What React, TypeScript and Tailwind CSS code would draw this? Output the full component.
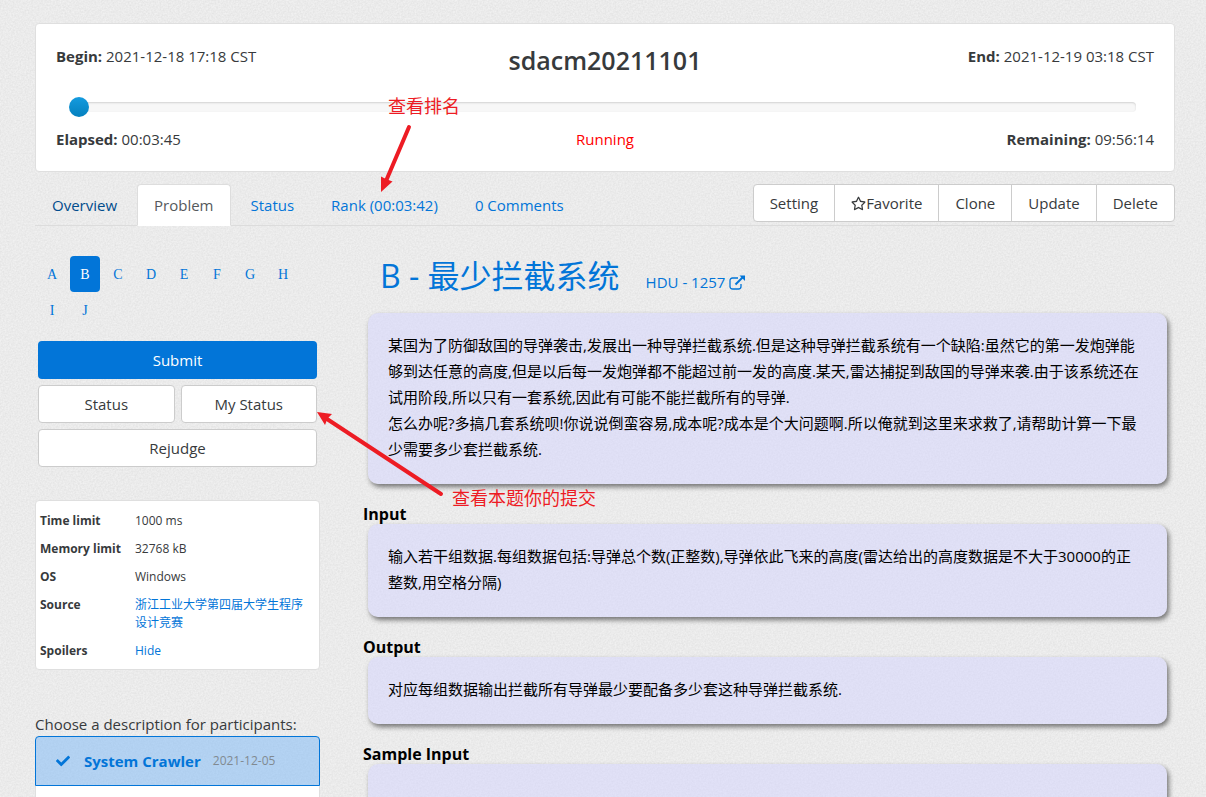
import { useState } from "react";
import { FaCheck, FaRegStar } from "react-icons/fa";

const tabs = ["Overview", "Problem", "Status", "Rank (00:03:42)", "0 Comments"];
const problems = ["A", "B", "C", "D", "E", "F", "G", "H", "I", "J"];
const actions = ["Setting", "Favorite", "Clone", "Update", "Delete"];

const limits = [
    { label: "Time limit", value: "1000 ms" },
    { label: "Memory limit", value: "32768 kB" },
    { label: "OS", value: "Windows" },
    { label: "Source", value: "浙江工业大学第四届大学生程序设计竞赛", link: true },
    { label: "Spoilers", value: "Hide", link: true },
];

const sections = [
    {
        title: "",
        lines: [
            "某国为了防御敌国的导弹袭击,发展出一种导弹拦截系统.但是这种导弹拦截系统有一个缺陷:虽然它的第一发炮弹能够到达任意的高度,但是以后每一发炮弹都不能超过前一发的高度.某天,雷达捕捉到敌国的导弹来袭.由于该系统还在试用阶段,所以只有一套系统,因此有可能不能拦截所有的导弹.",
            "怎么办呢?多搞几套系统呗!你说说倒蛮容易,成本呢?成本是个大问题啊.所以俺就到这里来求救了,请帮助计算一下最少需要多少套拦截系统.",
        ],
    },
    {
        title: "Input",
        lines: ["输入若干组数据.每组数据包括:导弹总个数(正整数),导弹依此飞来的高度(雷达给出的高度数据是不大于30000的正整数,用空格分隔)"],
    },
    { title: "Output", lines: ["对应每组数据输出拦截所有导弹最少要配备多少套这种导弹拦截系统."] },
    { title: "Sample Input", lines: [] },
];

const outlineButton = "h-[38px] rounded border border-[#cccccc] bg-white text-center hover:bg-gray-100";

// Paper-like grain behind the whole page
function Grain() {
    return (
        <svg className="absolute inset-0 -z-10 h-full w-full" aria-hidden="true">
            <filter id="grain" colorInterpolationFilters="sRGB">
                <feTurbulence type="fractalNoise" baseFrequency="0.6" numOctaves="2" stitchTiles="stitch" />
                <feColorMatrix values="0 0 0 0 0.4  0 0 0 0 0.4  0 0 0 0 0.4  0.15 0 0 0 -0.03" />
            </filter>
            <rect width="100%" height="100%" filter="url(#grain)" />
        </svg>
    );
}

function ContestHeader() {
    return (
        <header className="rounded border border-[#dfdfdf] bg-white px-5 py-5">
            <div className="grid grid-cols-3">
                <div className="leading-6">
                    <b>Begin:</b> 2021-12-18 17:18 CST
                </div>
                <h1 className="text-center text-[25px] leading-8 font-semibold">sdacm20211101</h1>
                <div className="text-right leading-6">
                    <b>End:</b> 2021-12-19 03:18 CST
                </div>
            </div>
            <div className="relative mt-[26px] mr-[18px] ml-4 h-[10px] rounded bg-[#f7f7f7] shadow-[inset_0_1px_2px_rgba(0,0,0,0.15)]">
                <input
                    type="range"
                    aria-label="Contest time"
                    min={0}
                    max={36000}
                    defaultValue={225}
                    className="absolute -inset-x-[10px] -top-[5px] h-5 appearance-none bg-transparent [&::-webkit-slider-thumb]:h-5 [&::-webkit-slider-thumb]:w-5 [&::-webkit-slider-thumb]:appearance-none [&::-webkit-slider-thumb]:rounded-full [&::-webkit-slider-thumb]:bg-linear-to-b [&::-webkit-slider-thumb]:from-[#149bdf] [&::-webkit-slider-thumb]:to-[#0480be]"
                />
            </div>
            <div className="mt-[15px] grid grid-cols-3 leading-6">
                <div>
                    <b>Elapsed:</b> 00:03:45
                </div>
                <div className="text-center text-[#ff0000]">Running</div>
                <div className="text-right">
                    <b>Remaining:</b> 09:56:14
                </div>
            </div>
        </header>
    );
}

function Sidebar() {
    const [current, setCurrent] = useState("B");

    return (
        <aside className="w-1/4 shrink-0">
            <div className="flex flex-wrap gap-x-[3px] pl-[2px] font-['Liberation_Serif',serif] text-[14px]">
                {problems.map((letter) => (
                    <button
                        key={letter}
                        onClick={() => setCurrent(letter)}
                        className={`h-9 w-[30px] rounded ${letter === current ? "bg-[#0275d8] text-white" : "text-[#0275d8]"}`}
                    >
                        {letter}
                    </button>
                ))}
            </div>

            <div className="mt-[13px] grid grid-cols-2 gap-[6px] px-[3px]">
                <button className="col-span-2 h-[38px] rounded bg-[#0275d8] text-white">Submit</button>
                <button className={outlineButton}>Status</button>
                <button className={outlineButton}>My Status</button>
                <button className={`${outlineButton} col-span-2`}>Rejudge</button>
            </div>

            <div className="mt-[33px] rounded border border-[#dfdfdf] bg-white py-[5px] text-[12px] leading-[18px]">
                <table className="w-full">
                    <tbody>
                        {limits.map((row) => (
                            <tr key={row.label} className="align-top">
                                <th scope="row" className="w-[94px] pt-[6px] pb-1 pl-1 text-left font-bold whitespace-nowrap">
                                    {row.label}
                                </th>
                                <td className="pt-[6px] pr-3 pb-1 pl-[5px]">
                                    {row.link ? <a href="#" className="text-[#0275d8]">{row.value}</a> : row.value}
                                </td>
                            </tr>
                        ))}
                    </tbody>
                </table>
            </div>

            <p className="mt-[42px] leading-6">Choose a description for participants:</p>
            <a
                href="#"
                className="flex h-[50px] items-center rounded-t border border-[#0275d8] bg-[#7ab8f8]/50 pl-5 text-[#0275d8]"
            >
                <FaCheck size={14} />
                <b className="ml-[14px]">System Crawler</b>
                <span className="ml-3 text-[12px] text-[#818a91]">2021-12-05</span>
            </a>
            <div className="h-[50px] border-x border-b border-[#dfdfdf] bg-white" />
        </aside>
    );
}

function Description() {
    return (
        <main className="min-w-0 flex-1 pr-2 pl-12">
            <div className="flex items-baseline pl-3 text-[#0275d8]">
                <h2 className="text-[32px] leading-10 font-medium">
                    <a href="#">
                        B - <span className="font-normal">最少拦截系统</span>
                    </a>
                </h2>
                <a href="#" className="ml-[26px] flex items-center gap-1">
                    HDU - 1257
                    <svg width="17" height="15" viewBox="0 0 17 15" fill="none" stroke="currentColor" aria-hidden="true">
                        <path d="M9 3H3.5A2.5 2.5 0 0 0 1 5.5V11.5A2.5 2.5 0 0 0 3.5 14H9.5A2.5 2.5 0 0 0 12 11.5V9" strokeWidth="1.3" />
                        <path d="M6.5 9.5L14 2" strokeWidth="2" />
                        <path d="M10.5 0.5H16V6Z" fill="currentColor" stroke="none" />
                    </svg>
                </a>
            </div>
            <div className="mt-[17px] text-black">
                {sections.map((section) => (
                    <section key={section.title} className="mb-5">
                        {section.title && (
                            <h3 className="-ml-[5px] text-[16px] leading-5 font-bold">{section.title}</h3>
                        )}
                        <div className="min-h-[67px] rounded-[10px] bg-[#d3d3ff]/50 pt-[19px] pr-6 pb-[22px] pl-5 leading-[26px] shadow-[2px_3px_5px_rgba(0,0,0,0.5)]">
                            {section.lines.map((line) => (
                                <p key={line}>{line}</p>
                            ))}
                        </div>
                    </section>
                ))}
            </div>
        </main>
    );
}

// Red callouts drawn over the page
function Callouts() {
    return (
        <div className="pointer-events-none absolute inset-0 text-[18px] leading-6 text-[#ed1c24]">
            <svg className="absolute inset-0 h-full w-full" fill="currentColor" stroke="currentColor" aria-hidden="true">
                <path d="M409 127L386 181" strokeWidth="4" strokeLinecap="round" />
                <path d="M381 192L381 176.5L386 179L392.5 181.5Z" stroke="none" />
                <path d="M441 494L327 419" strokeWidth="4" strokeLinecap="round" />
                <path d="M317 412L332 414L327.5 418.5L325 425Z" stroke="none" />
            </svg>
            <span className="absolute top-[94px] left-[388px]">查看排名</span>
            <span className="absolute top-[486px] left-[452px]">查看本题你的提交</span>
        </div>
    );
}

export default function App() {
    const [tab, setTab] = useState("Problem");

    return (
        <div className="relative isolate h-screen overflow-hidden bg-[#f1f1f1] pt-[23px] pr-[31px] pl-[35px] font-['Open_Sans','Noto_Sans_CJK_SC',sans-serif] text-[15px] text-[#373a3c]">
            <Grain />
            <ContestHeader />

            <div className="mt-3 flex items-start justify-between border-b border-[#dcdcdc]">
                <nav className="-mb-px flex gap-[3px]">
                    {tabs.map((name) => (
                        <a
                            key={name}
                            href="#"
                            onClick={() => setTab(name)}
                            className={`h-[42px] rounded-t border px-4 leading-10 ${
                                name === tab
                                    ? "border-[#dddddd] border-b-white bg-white text-[#55595c]"
                                    : name === "Overview"
                                        ? "border-transparent text-[#014c8c]"
                                        : "border-transparent text-[#0275d8]"
                            }`}
                        >
                            {name}
                        </a>
                    ))}
                </nav>
                <div className="flex">
                    {actions.map((name) => (
                        <button
                            key={name}
                            className="-ml-px flex h-[38px] items-center border border-[#cccccc] bg-white px-4 first:rounded-l last:rounded-r"
                        >
                            {name === "Favorite" && <FaRegStar size={15} />}
                            {name}
                        </button>
                    ))}
                </div>
            </div>

            <div className="mt-[30px] flex">
                <Sidebar />
                <Description />
            </div>

            <Callouts />
        </div>
    );
}
